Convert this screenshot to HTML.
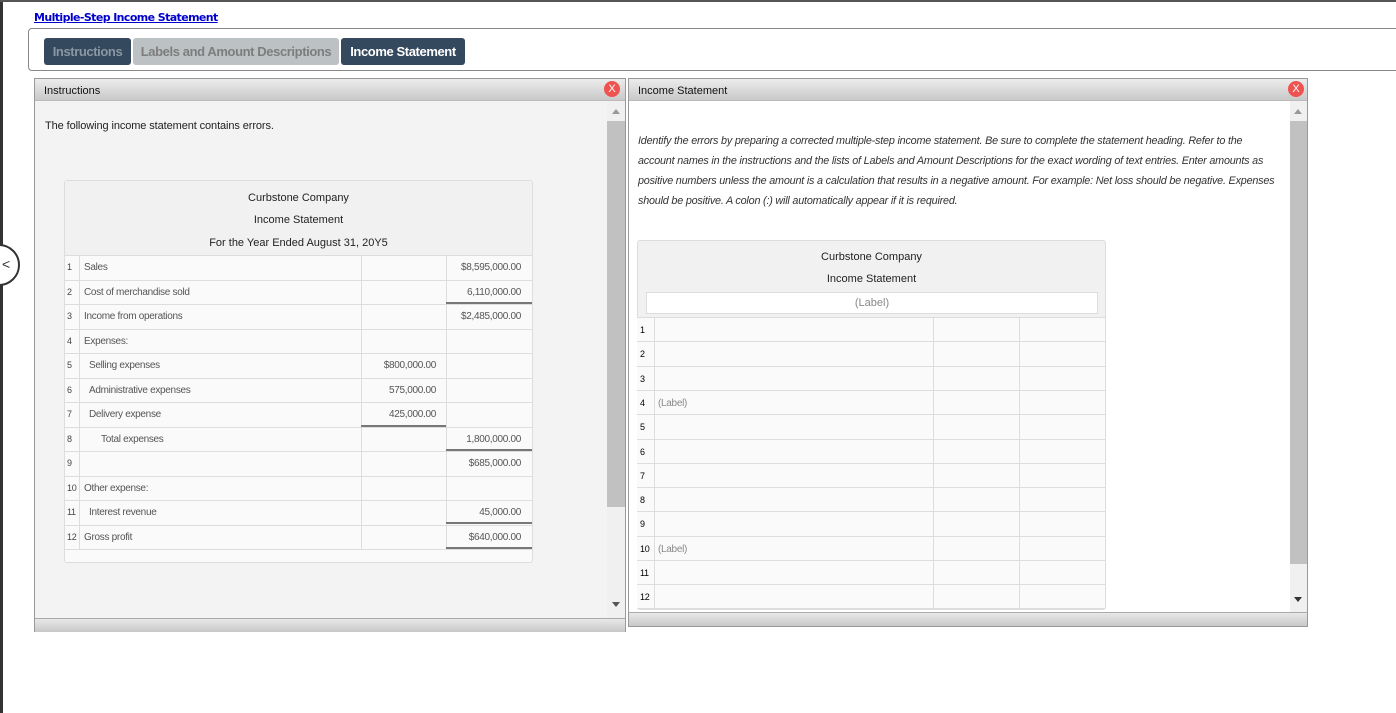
<!DOCTYPE html><html><head><style>
*{box-sizing:border-box;margin:0;padding:0}
body{width:1396px;height:713px;background:#fff;position:relative;overflow:hidden;font-family:"Liberation Sans",sans-serif}
.a{position:absolute}
.tab{position:absolute;top:38px;height:27px;font-size:13px;font-weight:bold;line-height:27px;text-align:center;border-radius:3px;letter-spacing:-.4px}
.hdr{position:absolute;left:0;right:0;top:0;height:22px;background:linear-gradient(#ececec,#c9c9c9);font-size:11px;line-height:24px;padding-left:9px;color:#111;border-bottom:1px solid #bbb}
.x{position:absolute;width:16px;height:16px;border-radius:50%;background:#ef5350;color:#fff;font-size:11px;text-align:center;line-height:16px}
.row{position:absolute;left:0;right:0;border-top:1px solid #ddd;font-size:10px;color:#555;letter-spacing:-.3px}
.c{position:absolute;top:0;bottom:0;border-left:1px solid #ddd}
.n{position:absolute;left:3px;font-size:9px;color:#444}
.r{position:absolute;text-align:right}
</style></head><body>
<div class="a" style="left:0;top:0;width:3px;height:713px;background:#333"></div>
<div class="a" style="left:0;top:0;width:1396px;height:2px;background:#555"></div>
<div class="a" style="left:-22px;top:244px;width:42px;height:42px;border:2px solid #333;border-radius:50%;background:#fff"></div>
<div class="a" style="left:2px;top:256px;font-size:14px;color:#333">&lt;</div>
<div class="a" style="left:34px;top:11px;font-size:11px;font-weight:bold;color:#00c;text-decoration:underline;font-family:'DejaVu Sans',sans-serif;letter-spacing:-.6px">Multiple-Step Income Statement</div>
<div class="a" style="left:28px;top:28px;width:1380px;height:43px;border:1px solid #888;border-radius:4px"></div>
<div class="tab" style="left:44px;width:87px;background:#34495e;color:#8a96a3">Instructions</div>
<div class="tab" style="left:133px;width:206px;background:#bcc1c4;color:#7d7d7d">Labels and Amount Descriptions</div>
<div class="tab" style="left:341px;width:124px;background:#34495e;color:#fff">Income Statement</div>

<div class="a" style="left:34px;top:78px;width:592px;height:554px;border:1px solid #999;background:#f2f3f2">
 <div class="hdr">Instructions</div>
 <div class="x" style="left:569px;top:2px">X</div>
 <div class="a" style="left:572px;top:22px;width:18px;height:518px;background:#f0f0f0"></div>
 <div class="a" style="left:572px;top:42px;width:18px;height:386px;background:#c1c1c1"></div>
 <div class="a" style="left:577px;top:30px;border:4px solid transparent;border-bottom:5px solid #999;border-top:0"></div>
 <div class="a" style="left:577px;top:523px;border:4px solid transparent;border-top:5px solid #555;border-bottom:0"></div>
 <div class="a" style="left:0;right:0;top:539px;height:14px;background:linear-gradient(#e8e8e8,#c8c8c8);border-top:1px solid #aaa"></div>
 <div class="a" style="left:10px;top:41px;font-size:11px;color:#222;letter-spacing:-.1px">The following income statement contains errors.</div>
</div>
<div class="a" style="left:64px;top:180px;width:469px;height:383px;border:1px solid #ddd;border-radius:3px;background:#fafafa">
 <div class="a" style="left:0;right:0;top:0;height:75px;background:#f1f1f1;font-size:11px;color:#222;text-align:center">
  <div class="a" style="left:0;right:0;top:11px">Curbstone Company</div>
  <div class="a" style="left:0;right:0;top:33px">Income Statement</div>
  <div class="a" style="left:0;right:0;top:56px">For the Year Ended August 31, 20Y5</div>
 </div>
</div>

<div class="a" style="left:628px;top:78px;width:680px;height:549px;border:1px solid #999;background:#fff">
 <div class="hdr">Income Statement</div>
 <div class="x" style="left:659px;top:2px">X</div>
 <div class="a" style="left:661px;top:22px;width:17px;height:512px;background:#f0f0f0"></div>
 <div class="a" style="left:661px;top:42px;width:17px;height:443px;background:#c1c1c1"></div>
 <div class="a" style="left:665px;top:30px;border:4px solid transparent;border-bottom:5px solid #999;border-top:0"></div>
 <div class="a" style="left:665px;top:518px;border:4px solid transparent;border-top:5px solid #333;border-bottom:0"></div>
 <div class="a" style="left:0;right:0;top:533px;height:14px;background:linear-gradient(#e8e8e8,#c8c8c8);border-top:1px solid #aaa"></div>
 <div class="a" style="left:9px;top:52px;width:640px;font-size:10.8px;line-height:20px;font-style:italic;color:#333;letter-spacing:-.2px">Identify the errors by preparing a corrected multiple-step income statement. Be sure to complete the statement heading. Refer to the account names in the instructions and the lists of Labels and Amount Descriptions for the exact wording of text entries. Enter amounts as positive numbers unless the amount is a calculation that results in a negative amount. For example: Net loss should be negative. Expenses should be positive. A colon (:) will automatically appear if it is required.</div>
</div>
<div class="a" style="left:637px;top:240px;width:469px;height:370px;border:1px solid #ddd;border-radius:3px;background:#f1f1f1;overflow:hidden">
 <div class="a" style="left:0;right:0;top:10px;text-align:center;font-size:11px;color:#222">Curbstone Company</div>
 <div class="a" style="left:0;right:0;top:32px;text-align:center;font-size:11px;color:#222">Income Statement</div>
 <div class="a" style="left:8px;top:51px;width:452px;height:22px;background:#fff;border:1px solid #ddd;text-align:center;font-size:11px;line-height:20px;color:#888">(Label)</div>
</div>
<div class="a" style="left:637px;top:317px;width:468px;height:292px;background:#fafafa"></div>

<div class="a" style="left:64px;top:255px;width:468px">
<div class="row" style="top:0;height:25px"><span class="n" style="top:6px">1</span><div class="c" style="left:15px"></div><div class="c" style="left:297px"></div><div class="c" style="left:382px"></div><span class="a" style="left:20px;top:6px">Sales</span><span class="r" style="right:11px;top:6px">$8,595,000.00</span></div>
<div class="row" style="top:24.5px;height:25px"><span class="n" style="top:6px">2</span><div class="c" style="left:15px"></div><div class="c" style="left:297px"></div><div class="c" style="left:382px"></div><span class="a" style="left:20px;top:6px">Cost of merchandise sold</span><span class="r" style="right:11px;top:6px">6,110,000.00</span></div>
<div class="row" style="top:49px;height:25px"><span class="n" style="top:6px">3</span><div class="c" style="left:15px"></div><div class="c" style="left:297px"></div><div class="c" style="left:382px"></div><span class="a" style="left:20px;top:6px">Income from operations</span><span class="r" style="right:11px;top:6px">$2,485,000.00</span></div>
<div class="row" style="top:73.5px;height:25px"><span class="n" style="top:6px">4</span><div class="c" style="left:15px"></div><div class="c" style="left:297px"></div><div class="c" style="left:382px"></div><span class="a" style="left:20px;top:6px">Expenses:</span></div>
<div class="row" style="top:98px;height:25px"><span class="n" style="top:6px">5</span><div class="c" style="left:15px"></div><div class="c" style="left:297px"></div><div class="c" style="left:382px"></div><span class="a" style="left:25px;top:6px">Selling expenses</span><span class="r" style="right:96px;top:6px">$800,000.00</span></div>
<div class="row" style="top:122.5px;height:25px"><span class="n" style="top:6px">6</span><div class="c" style="left:15px"></div><div class="c" style="left:297px"></div><div class="c" style="left:382px"></div><span class="a" style="left:25px;top:6px">Administrative expenses</span><span class="r" style="right:96px;top:6px">575,000.00</span></div>
<div class="row" style="top:147px;height:25px"><span class="n" style="top:6px">7</span><div class="c" style="left:15px"></div><div class="c" style="left:297px"></div><div class="c" style="left:382px"></div><span class="a" style="left:25px;top:6px">Delivery expense</span><span class="r" style="right:96px;top:6px">425,000.00</span></div>
<div class="row" style="top:171.5px;height:25px"><span class="n" style="top:6px">8</span><div class="c" style="left:15px"></div><div class="c" style="left:297px"></div><div class="c" style="left:382px"></div><span class="a" style="left:37px;top:6px">Total expenses</span><span class="r" style="right:11px;top:6px">1,800,000.00</span></div>
<div class="row" style="top:196px;height:25px"><span class="n" style="top:6px">9</span><div class="c" style="left:15px"></div><div class="c" style="left:297px"></div><div class="c" style="left:382px"></div><span class="r" style="right:11px;top:6px">$685,000.00</span></div>
<div class="row" style="top:220.5px;height:25px"><span class="n" style="top:6px">10</span><div class="c" style="left:15px"></div><div class="c" style="left:297px"></div><div class="c" style="left:382px"></div><span class="a" style="left:20px;top:6px">Other expense:</span></div>
<div class="row" style="top:245px;height:25px"><span class="n" style="top:6px">11</span><div class="c" style="left:15px"></div><div class="c" style="left:297px"></div><div class="c" style="left:382px"></div><span class="a" style="left:25px;top:6px">Interest revenue</span><span class="r" style="right:11px;top:6px">45,000.00</span></div>
<div class="row" style="top:269.5px;height:25px;border-bottom:1px solid #ddd"><span class="n" style="top:6px">12</span><div class="c" style="left:15px"></div><div class="c" style="left:297px"></div><div class="c" style="left:382px"></div><span class="a" style="left:20px;top:6px">Gross profit</span><span class="r" style="right:11px;top:6px">$640,000.00</span></div>
<div class="a" style="left:382px;top:47px;width:86px;height:2px;background:#777"></div>
<div class="a" style="left:297px;top:170px;width:85px;height:2px;background:#777"></div>
<div class="a" style="left:382px;top:194px;width:86px;height:2px;background:#777"></div>
<div class="a" style="left:382px;top:267px;width:86px;height:2px;background:#777"></div>
<div class="a" style="left:382px;top:292px;width:86px;height:2px;background:#777"></div>
</div>

<div class="a" style="left:637px;top:317px;width:468px">
<div class="row" style="top:0;height:25px"><span class="n" style="top:7px;color:#000">1</span><div class="c" style="left:17px"></div><div class="c" style="left:296px"></div><div class="c" style="left:382px"></div></div>
<div class="row" style="top:24.3px;height:25px"><span class="n" style="top:7px;color:#000">2</span><div class="c" style="left:17px"></div><div class="c" style="left:296px"></div><div class="c" style="left:382px"></div></div>
<div class="row" style="top:48.6px;height:25px"><span class="n" style="top:7px;color:#000">3</span><div class="c" style="left:17px"></div><div class="c" style="left:296px"></div><div class="c" style="left:382px"></div></div>
<div class="row" style="top:72.9px;height:25px"><span class="n" style="top:7px;color:#000">4</span><div class="c" style="left:17px"></div><div class="c" style="left:296px"></div><div class="c" style="left:382px"></div><span class="a" style="left:21px;top:7px;color:#888">(Label)</span></div>
<div class="row" style="top:97.2px;height:25px"><span class="n" style="top:7px;color:#000">5</span><div class="c" style="left:17px"></div><div class="c" style="left:296px"></div><div class="c" style="left:382px"></div></div>
<div class="row" style="top:121.5px;height:25px"><span class="n" style="top:7px;color:#000">6</span><div class="c" style="left:17px"></div><div class="c" style="left:296px"></div><div class="c" style="left:382px"></div></div>
<div class="row" style="top:145.8px;height:25px"><span class="n" style="top:7px;color:#000">7</span><div class="c" style="left:17px"></div><div class="c" style="left:296px"></div><div class="c" style="left:382px"></div></div>
<div class="row" style="top:170.1px;height:25px"><span class="n" style="top:7px;color:#000">8</span><div class="c" style="left:17px"></div><div class="c" style="left:296px"></div><div class="c" style="left:382px"></div></div>
<div class="row" style="top:194.4px;height:25px"><span class="n" style="top:7px;color:#000">9</span><div class="c" style="left:17px"></div><div class="c" style="left:296px"></div><div class="c" style="left:382px"></div></div>
<div class="row" style="top:218.7px;height:25px"><span class="n" style="top:7px;color:#000">10</span><div class="c" style="left:17px"></div><div class="c" style="left:296px"></div><div class="c" style="left:382px"></div><span class="a" style="left:21px;top:7px;color:#888">(Label)</span></div>
<div class="row" style="top:243px;height:25px"><span class="n" style="top:7px;color:#000">11</span><div class="c" style="left:17px"></div><div class="c" style="left:296px"></div><div class="c" style="left:382px"></div></div>
<div class="row" style="top:267.3px;height:25px;border-bottom:1px solid #ddd"><span class="n" style="top:7px;color:#000">12</span><div class="c" style="left:17px"></div><div class="c" style="left:296px"></div><div class="c" style="left:382px"></div></div>
</div>
</body></html>
